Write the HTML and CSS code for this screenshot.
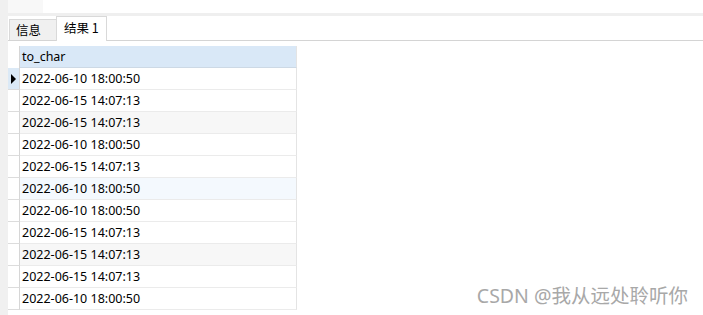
FILE: index.html
```html
<!DOCTYPE html>
<html lang="zh">
<head>
<meta charset="utf-8">
<link rel="stylesheet" href="styles.css">
</head>
<body>
<div class="app">
  <div class="strip"></div>
  <div class="main">
    <div class="top"><div class="top-a"></div><div class="top-b"></div></div>
    <div class="band"></div>
    <div class="tabs">
      <div class="tab">信息</div>
      <div class="tab active">结果 1</div>
    </div>
    <div class="grid">
      <div class="row head"><div class="ind"></div><div class="cell">to_char</div></div>
      <div class="row"><div class="ind cur"><span class="tri"></span></div><div class="cell">2022-06-10 18:00:50</div></div>
      <div class="row"><div class="ind"></div><div class="cell">2022-06-15 14:07:13</div></div>
      <div class="row grey"><div class="ind"></div><div class="cell">2022-06-15 14:07:13</div></div>
      <div class="row"><div class="ind"></div><div class="cell">2022-06-10 18:00:50</div></div>
      <div class="row"><div class="ind"></div><div class="cell">2022-06-15 14:07:13</div></div>
      <div class="row hover"><div class="ind"></div><div class="cell">2022-06-10 18:00:50</div></div>
      <div class="row"><div class="ind"></div><div class="cell">2022-06-10 18:00:50</div></div>
      <div class="row"><div class="ind"></div><div class="cell">2022-06-15 14:07:13</div></div>
      <div class="row grey"><div class="ind"></div><div class="cell">2022-06-15 14:07:13</div></div>
      <div class="row"><div class="ind"></div><div class="cell">2022-06-15 14:07:13</div></div>
      <div class="row"><div class="ind"></div><div class="cell">2022-06-10 18:00:50</div></div>
    </div>
  </div>
  <div class="watermark">CSDN @我从远处聆听你</div>
</div>
</body>
</html>
```
FILE: styles.css
```css
html, body {
  margin: 0;
  padding: 0;
  background: #ffffff;
}
.app {
  position: relative;
  display: flex;
  width: 703px;
  height: 315px;
  overflow: hidden;
  font-family: "Noto Sans", "Noto Sans CJK SC", sans-serif;
  color: #000;
}
.strip {
  width: 8px;
  background: #f0f0f0;
  flex: none;
}
.main {
  flex: 1;
  display: flex;
  flex-direction: column;
}
.top {
  height: 13px;
  display: flex;
}
.top-a {
  width: 35px;
  background: #f8f8f8;
}
.top-b {
  flex: 1;
  background: #fff;
}
.band {
  height: 3px;
  background: #efefef;
}
.tabs {
  height: 24px;
  display: flex;
  align-items: flex-end;
  padding-left: 1px;
  border-bottom: 1px solid #d4d4d4;
}
.tab {
  box-sizing: border-box;
  width: 47px;
  height: 21px;
  background: #f0f0f0;
  border: 1px solid #d9d9d9;
  border-bottom: none;
  border-right: none;
  padding-left: 6px;
  font-family: "Noto Sans CJK SC", sans-serif;
  font-size: 12.5px;
  line-height: 20px;
}
.tab.active {
  width: 51px;
  height: 25px;
  margin-bottom: -1px;
  background: #fff;
  border-right: 1px solid #d9d9d9;
  padding-left: 7px;
  line-height: 22px;
}
.grid {
  margin-top: 5px;
  display: flex;
  flex-direction: column;
}
.row {
  display: flex;
  height: 22px;
}
.ind {
  box-sizing: border-box;
  width: 12px;
  border-right: 1px solid #d6d6d6;
  border-bottom: 1px solid #dcdcdc;
  background: #fff;
  display: flex;
  align-items: center;
  padding-left: 3px;
}
.ind.cur {
  background: #dbe9f6;
}
.tri {
  width: 0;
  height: 0;
  border-top: 5px solid transparent;
  border-bottom: 5px solid transparent;
  border-left: 5px solid #000;
}
.cell {
  box-sizing: border-box;
  width: 277px;
  padding-left: 2px;
  border-bottom: 1px solid #ebebeb;
  border-right: 1px solid #e4e4e4;
  font-size: 12.5px;
  line-height: 21px;
  white-space: nowrap;
}
.row.head .ind {
  border-bottom: none;
}
.row.head .cell {
  background: #d9e8f7;
  border-bottom: 1px solid #cdd9e5;
}
.row.grey .cell {
  background: #f7f7f7;
}
.row.hover .cell {
  background: #f4f9fe;
}
.watermark {
  position: absolute;
  right: 15px;
  bottom: 6px;
  font-size: 19.5px;
  color: #a8a8a8;
  text-shadow: 1px 1px 1px #ffffff;
  white-space: nowrap;
}
```
